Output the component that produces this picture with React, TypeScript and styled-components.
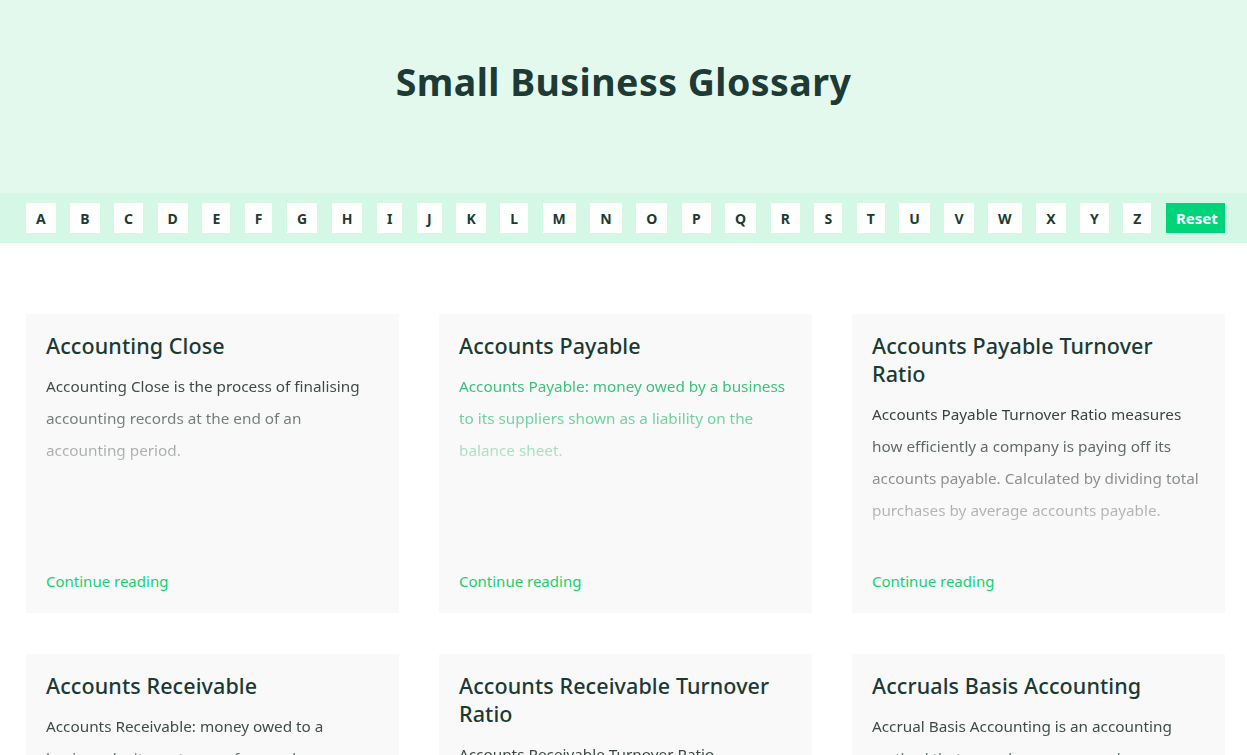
import React from "react";
import styled, { createGlobalStyle } from "styled-components";

const GlobalStyle = createGlobalStyle`
  * { box-sizing: border-box; }
  body {
    margin: 0;
    background: #ffffff;
    font-family: "Noto Sans", "Open Sans", sans-serif;
    color: #1d3a33;
  }
`;

const letters = "ABCDEFGHIJKLMNOPQRSTUVWXYZ".split("");

interface Term {
  title: string;
  text: string;
  hovered?: boolean;
}

const terms: Term[] = [
  {
    title: "Accounting Close",
    text: "Accounting Close is the process of finalising accounting records at the end of an accounting period.",
  },
  {
    title: "Accounts Payable",
    text: "Accounts Payable: money owed by a business to its suppliers shown as a liability on the balance sheet.",
    hovered: true,
  },
  {
    title: "Accounts Payable Turnover Ratio",
    text: "Accounts Payable Turnover Ratio measures how efficiently a company is paying off its accounts payable. Calculated by dividing total purchases by average accounts payable.",
  },
  {
    title: "Accounts Receivable",
    text: "Accounts Receivable: money owed to a business by its customers for goods or services delivered but not yet paid for.",
  },
  {
    title: "Accounts Receivable Turnover Ratio",
    text: "Accounts Receivable Turnover Ratio demonstrates how efficiently a company collects revenue from its customers.",
  },
  {
    title: "Accruals Basis Accounting",
    text: "Accrual Basis Accounting is an accounting method that records revenues and expenses when they are incurred.",
  },
];

export default function App() {
  return (
    <>
      <GlobalStyle />
      <Hero>
        <HeroTitle>Small Business Glossary</HeroTitle>
      </Hero>
      <AlphaBar>
        {letters.map((l) => (
          <LetterButton key={l}>{l}</LetterButton>
        ))}
        <ResetButton>Reset</ResetButton>
      </AlphaBar>
      <Grid>
        {terms.map((t) => (
          <Card key={t.title}>
            <CardTitle>{t.title}</CardTitle>
            <CardText hovered={!!t.hovered}>{t.text}</CardText>
            <ReadMore>Continue reading</ReadMore>
          </Card>
        ))}
      </Grid>
    </>
  );
}

const Hero = styled.header`
  height: 193px;
  background: #e3f9ee;
  display: flex;
  align-items: center;
  justify-content: center;
  padding-bottom: 30px;
`;

const HeroTitle = styled.h1`
  margin: 0;
  font-size: 37.5px;
  font-weight: 700;
  letter-spacing: 0.45px;
  color: #1e3a34;
`;

const AlphaBar = styled.nav`
  height: 50px;
  background: #d4f7e6;
  display: flex;
  align-items: center;
  justify-content: space-between;
  padding: 0 22px 0 26px;
`;

const LetterButton = styled.button`
  height: 30px;
  min-width: 25px;
  padding: 0 10px;
  border: none;
  background: #ffffff;
  font-family: inherit;
  font-size: 14px;
  font-weight: 700;
  color: #1d3a33;
  cursor: pointer;
`;

const ResetButton = styled(LetterButton)`
  width: 59px;
  background: #00d47a;
  color: #ffffff;
  font-size: 15px;
`;

const Grid = styled.main`
  display: grid;
  grid-template-columns: repeat(3, 1fr);
  column-gap: 40px;
  row-gap: 41px;
  padding: 71px 22px 40px 26px;
`;

const Card = styled.article`
  height: 299px;
  background: #f9f9f9;
  padding: 18px 20px 22px 20px;
  display: flex;
  flex-direction: column;
`;

const CardTitle = styled.h2`
  margin: 0 0 10px;
  font-size: 21.5px;
  font-weight: 500;
  line-height: 28px;
  letter-spacing: 0.1px;
  color: #1a3a33;
`;

const CardText = styled.p<{ hovered: boolean }>`
  margin: 0;
  font-size: 15.3px;
  line-height: 32px;
  color: ${(p) => (p.hovered ? "#1fb868" : "#22302c")};
  -webkit-mask-image: linear-gradient(to bottom, #000 0%, rgba(0, 0, 0, 0.25) 100%);
  mask-image: linear-gradient(to bottom, #000 0%, rgba(0, 0, 0, 0.25) 100%);
`;

const ReadMore = styled.a`
  margin-top: auto;
  font-size: 15px;
  line-height: 20px;
  color: #14d171;
  cursor: pointer;
`;
